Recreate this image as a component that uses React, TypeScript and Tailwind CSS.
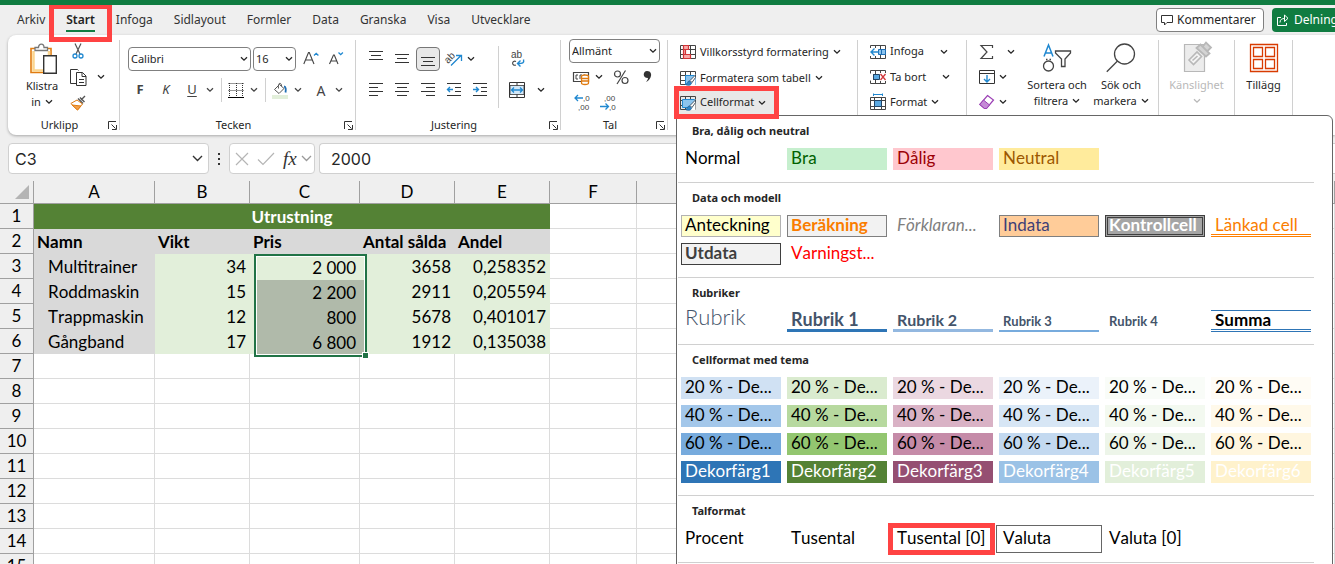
import type { ReactNode } from "react"
import clsx from "clsx"

const tabs = ["Arkiv", "Start", "Infoga", "Sidlayout", "Formler", "Data", "Granska", "Visa", "Utvecklare"]

function Chevron({ className }: { className?: string }) {
  return (
    <svg width="8" height="6" viewBox="0 0 8 6" fill="none" stroke="currentColor" strokeWidth="1.3" className={clsx("shrink-0", className)}>
      <path d="M1 1.2 4 4.2 7 1.2" />
    </svg>
  )
}

function Icon({ size = 16, children }: { size?: number; children: ReactNode }) {
  return (
    <svg
      width={size}
      height={size}
      viewBox={`0 0 ${size} ${size}`}
      fill="none"
      stroke="#444"
      strokeWidth="1"
      className="shrink-0 overflow-visible font-['Liberation_Sans',sans-serif]"
    >
      {children}
    </svg>
  )
}

function Tool({ label, className, children }: { label: string; className?: string; children: ReactNode }) {
  return (
    <button type="button" aria-label={label} className={clsx("flex h-6 shrink-0 items-center justify-center", className ?? "w-[26px]")}>
      {children}
    </button>
  )
}

function Group({ label, launcher, className, children }: { label?: string; launcher?: boolean; className: string; children: ReactNode }) {
  return (
    <section className={clsx("flex shrink-0 flex-col", className)}>
      <div className="flex flex-1">
        <div className="flex h-20 flex-1">{children}</div>
        <div className="mt-[5px] -mb-[15px] w-px bg-[#d0d0d0]" />
      </div>
      <div className="flex h-5 items-center px-[3px]">
        <span className="flex-1 text-center">{label}</span>
        {launcher && (
          <button type="button" aria-label={`Visa ${label}`}>
            <Icon size={9}>
              <path d="M.5 8V.5H8M3.5 3.5l4 4M8.5 4v4.5H4" stroke="#333" />
            </Icon>
          </button>
        )}
      </div>
    </section>
  )
}

function Combo({ label, value, className }: { label: string; value: string; className: string }) {
  return (
    <div className={clsx("grid h-6 shrink-0 items-center", className)}>
      <select aria-label={label} className="col-start-1 row-start-1 h-6 w-full appearance-none rounded border border-[#808080] bg-white pl-[2px]">
        <option>{value}</option>
      </select>
      <Chevron className="pointer-events-none col-start-1 row-start-1 mr-[3px] justify-self-end" />
    </div>
  )
}

function RowButton({ icon, label, gap, className }: { icon: ReactNode; label: string; gap?: string; className?: string }) {
  return (
    <button type="button" className={clsx("flex items-center whitespace-nowrap", className ?? "h-[26px]")}>
      {icon}
      <span className="ml-1">{label}</span>
      <Chevron className={gap ?? "ml-1"} />
    </button>
  )
}

function Lines({ rows, y = 2 }: { rows: [number, number][]; y?: number }) {
  return (
    <Icon>
      {rows.map(([x1, x2], i) => (
        <path key={i} d={`M${x1} ${y + i * 4 + 0.5}H${x2}`} stroke="#333" />
      ))}
    </Icon>
  )
}

function GridBase() {
  return <path d="M.5 1.5h15v13H.5zM.5 5.5h15M.5 10.5h15M5.5 1.5v13M10.5 1.5v13" />
}

function Brush() {
  return (
    <>
      <path d="M15.5 4v11H8z" fill="#fff" stroke="none" />
      <path d="M15.500 5 10 10.500l2 2 3.500-5z" fill="#fff" stroke="#345" strokeWidth=".9" />
      <path d="M9.500 11c-2.500 0-1 2.500-4 3.500 2.500 1.500 6 .8 6-1.500z" fill="#2f86c8" stroke="#1f5f96" strokeWidth=".8" />
    </>
  )
}

function Clipboard() {
  return (
    <div className="flex h-full w-[96px] shrink-0 pl-[17px]">
      <button type="button" className="flex flex-col items-center pt-[8px] leading-4">
        <svg width="30" height="32" viewBox="0 0 30 32" fill="none" className="ml-1">
          <path d="M2 5.500h20v24H2z" fill="#fff" stroke="#e07b10" strokeWidth="1.6" />
          <path d="M4.500 8v19.500H20V8" stroke="#fbd58f" strokeWidth="2.5" />
          <path d="M6 7.500v-3h3.500C9.500 0 15 0 15 4.500h3.500v3z" fill="#fff" stroke="#777" strokeWidth="1.3" />
          <path d="M14.700 12.700h12.600v17.600h-12.600z" fill="#fff" stroke="#333" strokeWidth="1.4" />
        </svg>
        <span className="mt-[3px]">Klistra</span>
        <span className="flex items-center gap-1">
          in <Chevron />
        </span>
      </button>
      <div className="ml-[7px] flex flex-col pt-[4px]">
        <Tool label="Klipp ut" className="w-6">
          <Icon>
            <path d="M5 .5 10 11M11 .5 6 11" stroke="#555" strokeWidth="1.2" />
            <circle cx="5" cy="13" r="2" stroke="#2088d0" strokeWidth="1.3" />
            <circle cx="11" cy="13" r="2" stroke="#2088d0" strokeWidth="1.3" />
          </Icon>
        </Tool>
        <button type="button" aria-label="Kopiera" className="flex h-[28px] items-center pl-1">
          <Icon size={17}>
            <path d="M6 14.5H.5V.5h7l1 1" stroke="#333" />
            <path d="M6.5 3.5h6l3.500 3.500v9.500H6.500zM12 3.500V7.500h4M9 10.500h5M9 13.500h5" stroke="#333" fill="#fff" />
          </Icon>
          <Chevron className="ml-[10px]" />
        </button>
        <Tool label="Hämta format" className="w-6">
          <Icon>
            <path d="M15 1 11 5M8 3.500l5 5M10 2.500l4.500 4.500" stroke="#555" strokeWidth="1.4" />
            <path d="M7 5 .8 8.500l6.700 6.500 5-6z" fill="#fff" stroke="#e07b10" />
            <path d="M2 10l9 1-3.500 4z" fill="#f3a04a" stroke="#e07b10" />
          </Icon>
        </Tool>
      </div>
    </div>
  )
}

function FontTools() {
  return (
    <div className="flex flex-col gap-[7px] pt-3 pl-[8px]">
      <div className="flex items-center">
        <Combo label="Teckensnitt" value="Calibri" className="w-[123px]" />
        <Combo label="Storlek" value="16" className="ml-[2px] w-[43px]" />
        <Tool label="Öka teckenstorlek" className="ml-[3px] w-6">
          <Icon>
            <path d="M.8 13 5.500 1.500h.8L11 13M2.500 9h7" strokeWidth="1.1" />
            <path d="M11 4.500l2.200-2.200L15.400 4.500" stroke="#2088d0" strokeWidth="1.3" />
          </Icon>
        </Tool>
        <Tool label="Minska teckenstorlek">
          <Icon>
            <path d="M1.500 13 5.500 4h.8L10 13M3 10h5.500" strokeWidth="1.1" />
            <path d="M10.500 1.500l2.200 2.200 2.200-2.200" stroke="#2088d0" strokeWidth="1.3" />
          </Icon>
        </Tool>
      </div>
      <div className="-ml-px flex items-center text-[13px] text-[#444]">
        <Tool label="Fet">
          <b>F</b>
        </Tool>
        <Tool label="Kursiv">
          <i>K</i>
        </Tool>
        <Tool label="Understruken">
          <u className="underline-offset-2">U</u>
        </Tool>
        <Chevron className="ml-px" />
        <div className="ml-[7px] h-6 w-px bg-[#d0d0d0]" />
        <Tool label="Kantlinjer" className="w-7">
          <Icon>
            <path d="M.5 1.500H16M.5 8.500H16M1.500 1v14M8.500 1v14M14.500 1v14" strokeDasharray="1 1" stroke="#333" />
            <path d="M0 15.500h16" stroke="#000" />
          </Icon>
        </Tool>
        <Chevron />
        <div className="ml-[7px] h-6 w-px bg-[#d0d0d0]" />
        <Tool label="Fyllningsfärg" className="w-7">
          <Icon>
            <path d="M0 13h16v4H0z" fill="#e2efda" stroke="none" />
            <path d="M7.500 2.500 2.500 7.500l4.500 4 5-5zM6.500 6.500C5.500 0 9.500 0 9.500 4" stroke="#555" />
            <path d="M12 4.500c2 0 2 3 1.500 6" stroke="#1f6fb5" strokeWidth="1.8" />
          </Icon>
        </Tool>
        <Chevron />
        <Tool label="Teckenfärg" className="ml-[5px] w-7 text-[14px]">
          A
        </Tool>
        <Chevron />
      </div>
    </div>
  )
}

function AlignTools() {
  return (
    <div className="flex">
      <div className="flex w-[134px] flex-col gap-[7px] pt-3 pl-[7px]">
        <div className="flex items-center">
          <Tool label="Justera överst">
            <Lines y={0} rows={[[1, 15], [3, 13], [1, 15]]} />
          </Tool>
          <Tool label="Centrera lodrätt">
            <Lines y={3} rows={[[1, 15], [3, 13], [1, 15]]} />
          </Tool>
          <button type="button" aria-label="Justera nederst" aria-pressed="true" className="mx-px flex h-6 w-6 items-center justify-center rounded border border-[#777] bg-[#e8e8e8]">
            <Lines y={6} rows={[[1, 15], [3, 13], [1, 15]]} />
          </button>
          <Tool label="Orientering">
            <Icon>
              <text x="-1" y="10" transform="rotate(-45 4 8)" fill="#444" stroke="none" fontSize="10">
                ab
              </text>
              <path d="M5 14.500 15 4.500M10 4.500H15.500V10" stroke="#2088d0" strokeWidth="1.3" />
            </Icon>
          </Tool>
          <Chevron className="-mr-2" />
        </div>
        <div className="flex items-center">
          <Tool label="Vänsterjustera">
            <Lines y={1} rows={[[1, 15], [1, 10], [1, 15], [1, 10]]} />
          </Tool>
          <Tool label="Centrera">
            <Lines y={1} rows={[[1, 15], [3, 13], [1, 15], [3, 13]]} />
          </Tool>
          <Tool label="Högerjustera">
            <Lines y={1} rows={[[1, 15], [6, 15], [1, 15], [6, 15]]} />
          </Tool>
          <Tool label="Minska indrag">
            <Icon>
              <path d="M1 1.500h14M9 5.500h6M9 9.500h6M1 13.500h14" stroke="#333" />
              <path d="M7 7.500H1.500M4 5 1.500 7.500 4 10" stroke="#2088d0" strokeWidth="1.4" />
            </Icon>
          </Tool>
          <Tool label="Öka indrag">
            <Icon>
              <path d="M1 1.500h14M9 5.500h6M9 9.500h6M1 13.500h14" stroke="#333" />
              <path d="M1 7.500h5.500M4 5l2.500 2.500L4 10" stroke="#2088d0" strokeWidth="1.4" />
            </Icon>
          </Tool>
        </div>
      </div>
      <div className="mt-[11px] ml-[8px] h-[62px] w-px bg-[#d0d0d0]" />
      <div className="flex flex-col items-start gap-[7px] pt-3 pl-[6px]">
        <Tool label="Radbyt text">
          <Icon>
            <text x="1" y="7" fill="#444" stroke="none" fontSize="10">
              ab
            </text>
            <path d="M6 10.500c-4-2-5 5 0 3.500" strokeWidth="1.1" />
            <path d="M13.500 8.500c1 3.500-1 4-5.500 4M10.500 9.500 7.500 12.500l3 3" stroke="#2088d0" strokeWidth="1.4" />
          </Icon>
        </Tool>
        <div className="flex items-center">
          <Tool label="Koppla och centrera" className="w-6">
            <Icon>
              <path d="M.5.5h15v15H.5zM8 1v3M8 12v3" stroke="#333" />
              <path d="M1 3.500h14v9H1z" fill="#d3e8f8" stroke="#333" strokeWidth=".8" />
              <path d="M2.500 8h11M5 5.500 2.500 8 5 10.500M11 5.500 13.500 8 11 10.500" stroke="#2088d0" strokeWidth="1.3" />
            </Icon>
          </Tool>
          <Chevron className="ml-2" />
        </div>
      </div>
    </div>
  )
}

function NumberTools() {
  return (
    <div className="flex flex-col pt-1 pl-[8px]">
      <Combo label="Talformat" value="Allmänt" className="w-[91px]" />
      <div className="mt-[2px] flex items-center">
        <Tool label="Redovisningsformat" className="w-6">
          <Icon>
            <path d="M.5 3.500h15v9H.5z" strokeWidth="1.2" />
            <path d="M5 6H3v4h2M7 10V6h2M12 6h-1.500v4" />
            <path d="M8.500 7.500c0-2 7-2 7 0v6.500c0 2-7 2-7 0z" fill="#fff" stroke="#e07b10" strokeWidth="1.3" />
            <path d="M8.500 9.500h7M8.500 12h7" stroke="#e07b10" strokeWidth="1.3" />
          </Icon>
        </Tool>
        <Chevron className="ml-[2px]" />
        <Tool label="Procentformat" className="ml-[6px] w-6">
          <Icon>
            <circle cx="4.500" cy="5" r="3" strokeWidth="1.2" />
            <circle cx="12" cy="11.500" r="3" strokeWidth="1.2" />
            <path d="M12.500 1.500 4 15" strokeWidth="1.2" />
          </Icon>
        </Tool>
        <Tool label="Tusentalsavgränsare" className="ml-[2px] w-6">
          <Icon>
            <path d="M8 2c4 0 5 3.500 3.500 6.500-1 2-2.500 3.500-4.500 4.500 1-1.500 2-2.500 2-4-6 0-5-7-1-7z" fill="#333" stroke="none" />
          </Icon>
        </Tool>
      </div>
      <div className="mt-px flex items-center">
        <Tool label="Öka decimal">
          <Icon>
            <text x="9" y="7" fill="#444" stroke="none" fontSize="8">,0</text>
            <text x="4" y="16" fill="#444" stroke="none" fontSize="8">,00</text>
            <path d="M9 4H.8M4 1 1 4l3 3" stroke="#2088d0" strokeWidth="1.3" />
          </Icon>
        </Tool>
        <Tool label="Minska decimal">
          <Icon>
            <text x="4" y="7" fill="#444" stroke="none" fontSize="8">,00</text>
            <text x="9" y="16" fill="#444" stroke="none" fontSize="8">,0</text>
            <path d="M0 12.500h8.500M5.500 9.500l3 3-3 3" stroke="#2088d0" strokeWidth="1.3" />
          </Icon>
        </Tool>
      </div>
    </div>
  )
}

type Swatch = { name: string; style: string }

const themeFills = [
  ["bg-[#d0e1f3]", "bg-[#daebcf]", "bg-[#ebd8e1]", "bg-[#ebf2fa]", "bg-[#f9fcf8]", "bg-[#fffcf5]"],
  ["bg-[#a3c7ea]", "bg-[#b7d99f]", "bg-[#d9b2c5]", "bg-[#d7e6f5]", "bg-[#f3f9f0]", "bg-[#fff9ea]"],
  ["bg-[#77abdd]", "bg-[#93c670]", "bg-[#c58ba8]", "bg-[#c3d9f0]", "bg-[#edf5e9]", "bg-[#fff6df]"],
  ["bg-[#2e75b6]", "bg-[#548235]", "bg-[#954f72]", "bg-[#9bc2e6]", "bg-[#e2efda]", "bg-[#fff2cc]"],
]

const sections: { title: string; items: Swatch[] }[] = [
  {
    title: "Bra, dålig och neutral",
    items: [
      { name: "Normal", style: "" },
      { name: "Bra", style: "bg-[#c6efce] text-[#006100]" },
      { name: "Dålig", style: "bg-[#ffc7ce] text-[#9c0006]" },
      { name: "Neutral", style: "bg-[#ffeb9c] text-[#9c5700]" },
    ],
  },
  {
    title: "Data och modell",
    items: [
      { name: "Anteckning", style: "bg-[#ffffcc] outline-1 -outline-offset-1 outline-[#b2b2b2]" },
      { name: "Beräkning", style: "bg-[#f2f2f2] font-bold text-[#fa7d00] outline-1 -outline-offset-1 outline-[#7f7f7f]" },
      { name: "Förklaran...", style: "text-[#7f7f7f] italic" },
      { name: "Indata", style: "bg-[#ffcc99] text-[#3f3f76] outline-1 -outline-offset-1 outline-[#7f7f7f]" },
      { name: "Kontrollcell", style: "bg-[#a5a5a5] font-bold text-white outline-3 outline-double -outline-offset-3 outline-[#3f3f3f]" },
      { name: "Länkad cell", style: "border-b-3 border-double border-[#ff8001] text-[#fa7d00]" },
      { name: "Utdata", style: "bg-[#f2f2f2] font-bold text-[#3f3f3f] outline-1 -outline-offset-1 outline-[#3f3f3f]" },
      { name: "Varningst...", style: "text-[#ff0000]" },
    ],
  },
  {
    title: "Rubriker",
    items: [
      { name: "Rubrik", style: "text-[22px] leading-[14px] font-light text-[#44546a]" },
      { name: "Rubrik 1", style: "items-end border-b-3 border-[#2e75b6] text-[18px] leading-[20px] font-bold text-[#44546a]" },
      { name: "Rubrik 2", style: "items-end border-b-3 border-[#93b8e0] text-[16px] leading-[18px] font-bold text-[#44546a]" },
      { name: "Rubrik 3", style: "items-end border-b-2 border-[#77abdd] text-[13px] leading-[18px] font-bold text-[#44546a]" },
      { name: "Rubrik 4", style: "items-end border-b-2 border-transparent text-[13px] leading-[18px] font-bold text-[#44546a]" },
      { name: "Summa", style: "border-t border-b-3 border-[#2e75b6] [border-bottom-style:double] leading-[18px] font-bold" },
    ],
  },
  {
    title: "Cellformat med tema",
    items: themeFills.flatMap((fills, row) =>
      fills.map((fill, i) => ({
        name: row < 3 ? `${(row + 1) * 20} % - De...` : `Dekorfärg${i + 1}`,
        style: clsx(fill, row === 3 && "text-white"),
      })),
    ),
  },
  {
    title: "Talformat",
    items: [
      { name: "Procent", style: "" },
      { name: "Tusental", style: "" },
      { name: "Tusental [0]", style: "w-[97px] outline-5 outline-[#ff4343]" },
      { name: "Valuta", style: "outline-1 outline-offset-2 outline-[#666]" },
      { name: "Valuta [0]", style: "" },
    ],
  },
]

function CellStyleMenu() {
  return (
    <div role="menu" className="absolute top-[24px] -left-[3px] z-10 w-[657px] rounded-tr-md border border-[#666] bg-white pr-[18px] pb-8 pl-px text-black">
      {sections.map((section) => (
        <div key={section.title} className="border-b border-[#d0d0d0] pb-3">
          <h3 className="h-8 pl-[14px] leading-[30px] font-bold text-[#262626]">{section.title}</h3>
          <div className="grid grid-cols-[repeat(6,100px)] gap-[6px] pl-[3px] font-[Lato,sans-serif] text-[17px] [font-kerning:none]">
            {section.items.map((item) => (
              <button
                key={item.name + item.style}
                type="button"
                role="menuitem"
                className={clsx("flex h-[22px] pl-1 whitespace-nowrap", !item.style.includes("leading") && "leading-[19px]", item.style)}
              >
                {item.name}
              </button>
            ))}
          </div>
        </div>
      ))}
    </div>
  )
}

function StyleTools() {
  return (
    <div className="flex flex-col items-start pt-1 pl-[12px]">
      <RowButton
        label="Villkorsstyrd formatering"
        icon={
          <Icon>
            <GridBase />
            <path d="M3.500 1.500h5v4h-5zM3.500 5.500h2v5h-2zM3.500 10.500h7v4h-7z" fill="#f7a8a8" stroke="#d13438" strokeWidth="1.2" />
          </Icon>
        }
      />
      <RowButton
        label="Formatera som tabell"
        icon={
          <Icon>
            <GridBase />
            <path d="M5.500 5.500h10v9h-10z" fill="#8cc4ee" stroke="#2088d0" />
            <Brush />
          </Icon>
        }
      />
      <div className="relative -ml-px">
        <RowButton
          className="relative z-20 h-[23px] w-[95px] bg-[#e8e8e8] pl-px outline-5 outline-[#ff4343]"
          label="Cellformat"
          icon={
            <Icon>
              <GridBase />
              <path d="M2.500 4.500h12v8h-12z" fill="#8cc4ee" stroke="#2088d0" />
              <Brush />
            </Icon>
          }
        />
        <CellStyleMenu />
      </div>
    </div>
  )
}

function CellTools() {
  return (
    <div className="flex flex-col items-start pt-1 pl-[12px]">
      <RowButton
        label="Infoga"
        gap="ml-4"
        icon={
          <Icon>
            <GridBase />
            <path d="M0 4h9v8H0z" fill="#fff" stroke="none" />
            <path d="M8.500 5.500h7v5h-7zM11.500 5.500v5" fill="#8cc4ee" stroke="#1f6fb5" />
            <path d="M9 8H1M4.500 4.500 1 8l3.500 3.500" stroke="#2088d0" strokeWidth="1.4" />
          </Icon>
        }
      />
      <RowButton
        label="Ta bort"
        gap="ml-4"
        icon={
          <Icon>
            <GridBase />
            <path d="M0 4.500h3v7H0zM9 4h7.500v8H9z" fill="#fff" stroke="none" />
            <path d="M3.500 5.500h6v5h-6z" fill="#5ba9e2" stroke="#246" />
            <path d="M10.500 5l5 6M15.500 5l-5 6" stroke="#d13438" strokeWidth="1.3" />
          </Icon>
        }
      />
      <RowButton
        label="Format"
        icon={
          <Icon>
            <path d="M.5 3.500h15v12H.5zM.5 6.500h15M.5 12.500h15M4.500 3.500v12M11.500 3.500v12" />
            <path d="M4.500 6.500h7v6h-7z" fill="#5ba9e2" stroke="#246" />
            <path d="M3.500.5h9M3.500-.5v2.500M12.500-.5v2.500" stroke="#2088d0" />
          </Icon>
        }
      />
    </div>
  )
}

function BigButton({ icon, label, second, chevron = true, className }: { icon: ReactNode; label: string; second?: string; chevron?: boolean; className?: string }) {
  return (
    <button type="button" className={clsx("flex shrink-0 flex-col items-center pt-[8px] leading-4 whitespace-nowrap", className)}>
      {icon}
      <span className="mt-[4px]">{label}</span>
      {chevron && (
        <span className="flex h-4 items-center gap-1">
          {second} <Chevron />
        </span>
      )}
    </button>
  )
}

function EditTools() {
  return (
    <div className="flex">
      <div className="flex w-[54px] flex-col items-start pt-1 pl-[12px]">
        <button type="button" aria-label="Summa" className="flex h-[26px] items-center gap-3">
          <Icon>
            <path d="M13.500 4V1.500H2L8 8l-6 6.500h11.500V12" strokeWidth="1.2" />
          </Icon>
          <Chevron />
        </button>
        <button type="button" aria-label="Fyll" className="flex h-[26px] items-center gap-1">
          <Icon>
            <path d="M.5 1.500h15v13H.5zM.5 4.500h15" stroke="#333" />
            <path d="M8 6v7M5 10l3 3 3-3" stroke="#2088d0" strokeWidth="1.4" />
          </Icon>
          <Chevron />
        </button>
        <button type="button" aria-label="Rensa" className="flex h-[26px] items-center gap-1">
          <Icon>
            <path d="M8.500 1.500 14.500 6l-7 8.500H5.500L.8 10.500z" stroke="#9b3fb5" strokeWidth="1.2" />
            <path d="M4.500 6 10.500 11 7.500 14.500h-2L.8 10.500z" fill="#c58ad6" stroke="#9b3fb5" />
          </Icon>
          <Chevron />
        </button>
      </div>
      <BigButton
        className="w-[72px]"
        label="Sortera och"
        second="filtrera"
        icon={
          <svg width="30" height="30" viewBox="0 0 30 30" fill="none" stroke="#444" strokeWidth="1.3">
            <path d="M2 13.500 6.500 2 11 13.500M3.500 10h6" stroke="#2088d0" strokeWidth="1.5" />
            <ellipse cx="6.500" cy="23" rx="5" ry="5" />
            <path d="M4 16.500h1.500M7.500 16.500H9M13.500 8h15v2l-5.500 6v7.500h-3.500V16L13.500 10z" />
          </svg>
        }
      />
      <BigButton
        className="w-[56px]"
        label="Sök och"
        second="markera"
        icon={
          <svg width="30" height="30" viewBox="0 0 30 30" fill="none" stroke="#444" strokeWidth="1.3">
            <circle cx="18.500" cy="11" r="10" />
            <path d="M11.500 18 .8 28.700" />
          </svg>
        }
      />
    </div>
  )
}

function Ribbon() {
  return (
    <div className="ml-2 flex h-[100px] rounded-l-lg bg-white text-[11px] text-[#262626] shadow-[0_1px_3px_rgba(0,0,0,0.3)]">
      <Group label="Urklipp" launcher className="w-[112px]">
        <Clipboard />
      </Group>
      <Group label="Tecken" launcher className="w-[236px]">
        <FontTools />
      </Group>
      <Group label="Justering" launcher className="w-[205px]">
        <AlignTools />
      </Group>
      <Group label="Tal" launcher className="w-[107px]">
        <NumberTools />
      </Group>
      <Group className="w-[190px]">
        <StyleTools />
      </Group>
      <Group className="w-[109px]">
        <CellTools />
      </Group>
      <Group className="w-[192px]">
        <EditTools />
      </Group>
      <Group className="w-[76px]">
        <BigButton
          className="w-[75px] text-[#b8b8b8]"
          label="Känslighet"
          icon={
            <svg width="30" height="30" viewBox="0 0 30 30" fill="none" stroke="#b8b8b8" strokeWidth="1.2" className="overflow-visible">
              <path d="M2.500 1.500h20v27h-20z" fill="#ececec" />
              <path d="M7 17 15 9l4.500 4.500-8 8zM10.500 17.500l5-4.500" fill="#f4f4f4" strokeWidth="1.6" />
              <path d="M14.500 5 18.500 1.500 27.500 10.500l-3.500 3zM20.500 4 24-.5l5 5L25 8.500" fill="#d4d4d4" strokeWidth="1.8" />
            </svg>
          }
        />
      </Group>
      <Group className="w-[58px]">
        <BigButton
          className="w-[57px]"
          chevron={false}
          label="Tillägg"
          icon={
            <svg width="30" height="30" viewBox="0 0 30 30" fill="none" stroke="#d83b01" strokeWidth="1.3">
              <path d="M1.500 1.500h27v27h-27zM4.500 4.500h9v9h-9zM16.500 4.500h9v9h-9zM4.500 16.500h9v9h-9zM16.500 16.500h9v9h-9z" />
            </svg>
          }
        />
      </Group>
    </div>
  )
}

function TabBar() {
  return (
    <nav className="flex h-[30px] items-center pl-[17px] text-xs text-[#333]">
      <div className="flex gap-[21px]">
        {tabs.map((tab) =>
          tab === "Start" ? (
            <button key={tab} type="button" className="relative h-[30px] font-semibold text-[#222]">
              {tab}
              <span className="absolute inset-x-0 bottom-[3px] h-[2px] bg-[#107c41]" />
              <span className="absolute -inset-x-[17px] -top-px -bottom-[7px] z-20 border-5 border-[#ff4343]" />
            </button>
          ) : (
            <button key={tab} type="button" className="h-[30px]">
              {tab}
            </button>
          ),
        )}
      </div>
      <button type="button" className="ml-auto flex h-6 w-[108px] shrink-0 items-center gap-1 rounded border border-[#808080] bg-white pl-1 text-[#262626]">
        <svg width="12" height="12" viewBox="0 0 12 12" fill="none" stroke="#333">
          <path d="M.5 1.500h11v7H6L3.500 11V8.500h-3z" />
        </svg>
        Kommentarer
      </button>
      <button type="button" className="ml-2 flex h-6 w-[63px] shrink-0 items-center gap-[5px] overflow-hidden rounded-l bg-[#107c41] pl-[5px] text-white">
        <svg width="12" height="12" viewBox="0 0 12 12" fill="none" stroke="#fff" className="shrink-0">
          <path d="M4 3.500H.5v8h9V9M3 8.500c0-3 2-4 4.500-4M7.500 1l3.500 3.300L7.500 7.500V1z" />
        </svg>
        Delning
      </button>
    </nav>
  )
}

function FormulaBar() {
  return (
    <div className="flex h-[46px] items-start pt-2 pl-2 font-[Inter,sans-serif] text-base text-[#262626]">
      <div className="grid w-[201px] shrink-0 items-center">
        <input aria-label="Namnruta" defaultValue="C3" className="col-start-1 row-start-1 h-[31px] w-full rounded border border-[#d0d0d0] bg-white pl-[6px]" />
        <svg width="11" height="7" viewBox="0 0 11 7" fill="none" stroke="#333" strokeWidth="1.4" className="col-start-1 row-start-1 mr-[6px] justify-self-end">
          <path d="M1 1l4.500 4.500L10 1" />
        </svg>
      </div>
      <svg width="20" height="31" viewBox="0 0 20 31" fill="#333" className="shrink-0">
        <path d="M9 10h2v2H9zM9 15h2v2H9zM9 20h2v2H9z" />
      </svg>
      <div className="flex h-[31px] w-[86px] shrink-0 items-center rounded border border-[#d0d0d0] bg-white pl-[5px]">
        <button type="button" aria-label="Avbryt">
          <svg width="14" height="14" viewBox="0 0 14 14" stroke="#b5b5b5" strokeWidth="1.2">
            <path d="M1 1l12 12M13 1 1 13" />
          </svg>
        </button>
        <button type="button" aria-label="Ange" className="ml-2">
          <svg width="18" height="14" viewBox="0 0 18 14" fill="none" stroke="#b5b5b5" strokeWidth="1.2">
            <path d="M1 7.500l5 5L17 1" />
          </svg>
        </button>
        <button type="button" aria-label="Infoga funktion" className="ml-2 flex items-center font-['Liberation_Serif',serif] text-[19px] leading-6 text-[#333] italic">
          fx
          <svg width="11" height="7" viewBox="0 0 11 7" fill="none" stroke="#999" strokeWidth="1.3" className="ml-1">
            <path d="M1 1l4.500 4.500L10 1" />
          </svg>
        </button>
      </div>
      <input aria-label="Formelfält" defaultValue="2000" className="ml-1 h-[31px] min-w-0 flex-1 rounded-l border border-r-0 border-[#d0d0d0] bg-white pl-[11px]" />
    </div>
  )
}

const columns = ["A", "B", "C", "D", "E", "F", ""]

const products = [
  ["Multitrainer", "34", "2 000", "3658", "0,258352"],
  ["Roddmaskin", "15", "2 200", "2911", "0,205594"],
  ["Trappmaskin", "12", "800", "5678", "0,401017"],
  ["Gångband", "17", "6 800", "1912", "0,135038"],
]

const emptyCell = "border-r border-b border-[#dcdcdc] bg-white"

function RowHeader({ n }: { n: number }) {
  return (
    <th scope="row" className="h-[25px] border-r border-b border-[#a0a0a0] bg-[#efefef] p-0 font-normal">
      {n}
    </th>
  )
}

function Sheet() {
  return (
    <table className="w-full table-fixed border-separate border-spacing-0 font-[Lato,sans-serif] text-[17px] leading-6 text-black [font-kerning:none]">
      <colgroup>
        <col className="w-[34px]" />
        <col className="w-[121px]" />
        <col className="w-[95px]" />
        <col className="w-[110px]" />
        <col className="w-[95px]" />
        <col className="w-[95px]" />
        <col className="w-[87px]" />
        <col />
      </colgroup>
      <thead>
        <tr>
          <th className="h-[23px] border-r border-b border-[#a0a0a0] p-0">
            <svg width="16" height="16" viewBox="0 0 16 16" className="mr-[3px] ml-auto">
              <path d="M15 1v14H1z" fill="#b4b4b4" />
            </svg>
          </th>
          {columns.map((column) => (
            <th key={column} scope="col" className="h-[23px] border-r border-b border-[#a0a0a0] p-0 leading-[22px] font-normal">
              {column}
            </th>
          ))}
        </tr>
      </thead>
      <tbody>
        <tr>
          <RowHeader n={1} />
          <td colSpan={5} className="bg-[#548235] p-0 text-center font-bold text-white">
            Utrustning
          </td>
          <td className={emptyCell} />
          <td className={emptyCell} />
        </tr>
        <tr>
          <RowHeader n={2} />
          {["Namn", "Vikt", "Pris", "Antal sålda", "Andel"].map((title) => (
            <td key={title} className="bg-[#d9d9d9] p-0 pl-[3px] font-bold whitespace-nowrap">
              {title}
            </td>
          ))}
          <td className={emptyCell} />
          <td className={emptyCell} />
        </tr>
        {products.map(([name, weight, price, sold, share], i) => (
          <tr key={name}>
            <RowHeader n={i + 3} />
            <td className="bg-[#d9d9d9] p-0 pl-[14px] whitespace-nowrap">{name}</td>
            <td className="bg-[#e2efda] p-0 pr-1 text-right">{weight}</td>
            <td className="relative bg-[#e2efda] p-0 pt-[3px] pr-1 text-right leading-[22px]">
              {price}
              {i === 0 && (
                <div className="absolute top-0 left-[4px] z-[1] h-[103px] w-[113px] border-2 border-[#217346]">
                  <div className="h-full border border-white pt-[23px]">
                    <div className="h-full bg-black/22" />
                  </div>
                  <div className="absolute -right-[4px] -bottom-[4px] h-[7px] w-[7px] border border-white bg-[#217346]" />
                </div>
              )}
            </td>
            <td className="bg-[#e2efda] p-0 pr-1 text-right">{sold}</td>
            <td className="bg-[#e2efda] p-0 pr-1 text-right">{share}</td>
            <td className={emptyCell} />
            <td className={emptyCell} />
          </tr>
        ))}
        {[7, 8, 9, 10, 11, 12, 13, 14, 15].map((n) => (
          <tr key={n}>
            <RowHeader n={n} />
            {columns.map((column) => (
              <td key={column} className={emptyCell} />
            ))}
          </tr>
        ))}
      </tbody>
    </table>
  )
}

export default function App() {
  return (
    <div className="h-screen overflow-hidden border-t-5 border-[#107c41] bg-[#efefef] font-['Noto_Sans',sans-serif]">
      <TabBar />
      <Ribbon />
      <FormulaBar />
      <Sheet />
    </div>
  )
}
